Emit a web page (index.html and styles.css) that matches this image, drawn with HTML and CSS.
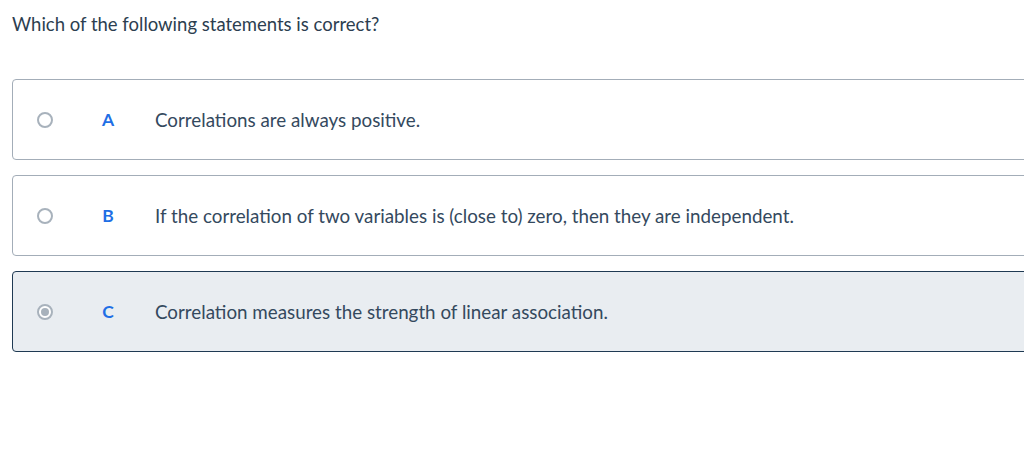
FILE: index.html
```html
<!DOCTYPE html>
<html>
<head>
<meta charset="utf-8">
<link rel="stylesheet" href="styles.css">
</head>
<body>
<div class="page">
  <p class="question">Which of the following statements is correct?</p>
  <div class="options">
    <div class="option">
      <span class="radio"></span>
      <span class="letter">A</span>
      <span class="text">Correlations are always positive.</span>
    </div>
    <div class="option">
      <span class="radio"></span>
      <span class="letter">B</span>
      <span class="text">If the correlation of two variables is (close to) zero, then they are independent.</span>
    </div>
    <div class="option selected">
      <span class="radio"></span>
      <span class="letter">C</span>
      <span class="text">Correlation measures the strength of linear association.</span>
    </div>
  </div>
</div>
</body>
</html>
```
FILE: styles.css
```css
html, body {
  margin: 0;
  padding: 0;
  background: #ffffff;
}
.page {
  padding: 12px 0 0 12px;
  font-family: Lato, "Noto Sans", sans-serif;
  color: #2f4256;
  overflow: hidden;
}
.question {
  margin: 0;
  font-size: 18.5px;
  line-height: 24px;
  color: #2c3e50;
}
.options {
  margin-top: 43px;
  display: flex;
  flex-direction: column;
  gap: 15px;
  margin-right: -20px;
}
.option {
  height: 79px;
  border: 1px solid #a3adb8;
  border-radius: 4px;
  display: flex;
  align-items: center;
  background: #ffffff;
}
.option.selected {
  background: #e9edf1;
  border-color: #1f3a53;
}
.radio {
  width: 12px;
  height: 12px;
  margin-left: 24px;
  border: 2px solid #a8b2bc;
  border-radius: 50%;
  background: #ffffff;
  box-sizing: content-box;
  position: relative;
}
.option.selected .radio::after {
  content: "";
  position: absolute;
  left: 2px;
  top: 2px;
  width: 8px;
  height: 8px;
  border-radius: 50%;
  background: #a8b2bc;
}
.letter {
  width: 16px;
  margin-left: 47px;
  text-align: center;
  font-weight: 700;
  font-size: 17.5px;
  color: #1f6fe5;
}
.text {
  margin-left: 39px;
  font-size: 18.8px;
  color: #34495e;
}
```
